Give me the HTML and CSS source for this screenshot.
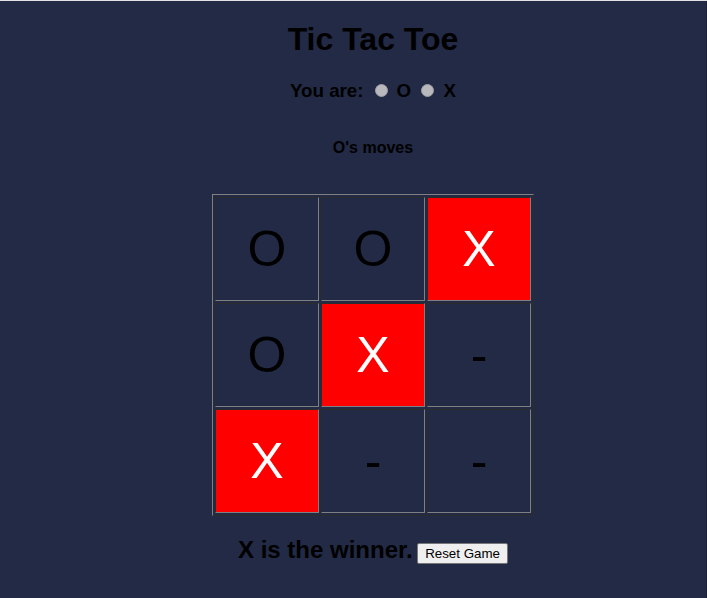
FILE: index.html
```html
<!DOCTYPE html>
<html>
<head>
<meta charset="utf-8">
<title>Tic Tac Toe</title>
<link rel="stylesheet" href="styles.css">
</head>
<body>
<div class="app">
  <h1 class="title">Tic Tac Toe</h1>
  <div class="you">
    <span class="you-label">You are:</span>
    <span class="radio radio-o"></span>
    <span class="opt">O</span>
    <span class="radio radio-x"></span>
    <span class="opt">X</span>
  </div>
  <div class="moves">O's moves</div>
  <table class="board">
    <tr>
      <td class="cell">O</td>
      <td class="cell">O</td>
      <td class="cell win">X</td>
    </tr>
    <tr>
      <td class="cell">O</td>
      <td class="cell win">X</td>
      <td class="cell">-</td>
    </tr>
    <tr>
      <td class="cell win">X</td>
      <td class="cell">-</td>
      <td class="cell">-</td>
    </tr>
  </table>
  <div class="result"><span class="winner">X is the winner.</span> <button class="reset">Reset Game</button></div>
</div>
</body>
</html>
```

FILE: styles.css
```css
html {
  background: #222a45;
  border-top: 1px solid #e2e2e2;
  height: 100%;
  box-sizing: border-box;
}
body {
  margin: 0;
  font-family: "Liberation Sans", Arial, sans-serif;
  color: #000;
  border-right: 1px solid #1a2038;
  min-height: 597px;
  box-sizing: border-box;
}
.app {
  padding-left: 40px;
  text-align: center;
}
.title {
  margin: 0;
  padding-top: 20px;
  font-size: 32px;
  line-height: 37px;
  font-weight: bold;
}
.you {
  margin-top: 21.5px;
  display: flex;
  justify-content: center;
  align-items: center;
  height: 22px;
  font-size: 18.72px;
  font-weight: bold;
  line-height: 22px;
}
.radio {
  display: inline-block;
  width: 13px;
  height: 13px;
  box-sizing: border-box;
  border-radius: 50%;
  background: #b8b8bd;
  border: 1px solid #9e9ea6;
}
.radio-o {
  margin-left: 12px;
  margin-right: 8px;
}
.radio-x {
  margin-left: 10px;
  margin-right: 9.5px;
}
.moves {
  margin-top: 37px;
  font-size: 16px;
  font-weight: bold;
  line-height: 18px;
}
.board {
  margin: 37.5px auto 0;
  border: 1px outset grey;
  border-spacing: 2px;
}
.cell {
  width: 100px;
  height: 100px;
  padding: 1px;
  border: 1px inset grey;
  font-size: 50px;
  text-align: center;
  vertical-align: middle;
  color: #000;
}
.cell.win {
  background: #ff0000;
  color: #fff;
}
.result {
  margin-top: 20px;
  line-height: 28px;
}
.winner {
  font-size: 24px;
  font-weight: bold;
}
.reset {
  font-family: "Liberation Sans", Arial, sans-serif;
  font-size: 13.333px;
  padding: 2px 7px;
  border: 1px solid #767676;
  border-radius: 2px;
  background: #efefef;
  color: #000;
}
```
